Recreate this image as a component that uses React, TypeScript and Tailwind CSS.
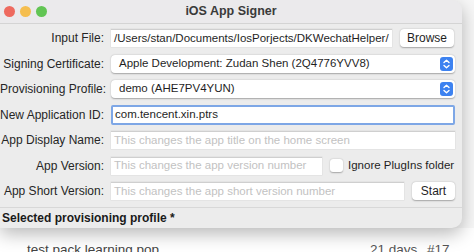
import { ReactNode } from 'react';

const FONT = { fontFamily: '"Liberation Sans", Arial, sans-serif' };

function Label({ children }: { children: ReactNode }) {
  return (
    <div className="w-[105px] shrink-0 whitespace-nowrap pr-[1px] text-right text-[12px] text-[#262626]">{children}</div>
  );
}

function Field({ value, placeholder, className = '' }: { value?: string; placeholder?: string; className?: string }) {
  return (
    <div
      className={`flex h-[18px] items-center overflow-hidden whitespace-nowrap border-t border-[#cfcfcf] bg-white px-[3px] text-[11.5px] shadow-[0_0_0_0.5px_#dcdcdc] ${className}`}
    >
      {value ? <span className="text-[#1f1f1f]">{value}</span> : <span className="text-[#c2c2c2]">{placeholder}</span>}
    </div>
  );
}

function Stepper() {
  return (
    <div className="flex h-[14px] w-[13px] items-center justify-center rounded-[3px] bg-[#3d82f0]">
      <svg width="7" height="10" viewBox="0 0 7 10" fill="none" stroke="white" strokeWidth="1.4" strokeLinecap="round" strokeLinejoin="round">
        <path d="M1 3.5 L3.5 1.2 L6 3.5" />
        <path d="M1 6.5 L3.5 8.8 L6 6.5" />
      </svg>
    </div>
  );
}

function Popup({ value }: { value: string }) {
  return (
    <div className="flex h-[18px] flex-1 items-center justify-between whitespace-nowrap rounded-[4px] bg-white pl-[8px] pr-[2px] text-[11.5px] text-[#1f1f1f] shadow-[0_0.5px_1.5px_rgba(0,0,0,0.3)]">
      <span>{value}</span>
      <Stepper />
    </div>
  );
}

function Button({ children, className = '' }: { children: ReactNode; className?: string }) {
  return (
    <div
      className={`flex h-[18px] shrink-0 items-center justify-center rounded-[4px] bg-white text-[12px] text-[#1f1f1f] shadow-[0_0.5px_1.5px_rgba(0,0,0,0.3)] ${className}`}
    >
      {children}
    </div>
  );
}

function Row({ children }: { children: ReactNode }) {
  return <div className="flex h-[20px] items-center gap-[6px]">{children}</div>;
}

export default function App() {
  return (
    <div className="relative h-[252px] w-[474px] overflow-hidden bg-[#f7f7f7]" style={FONT}>
      <div className="absolute left-0 top-[228px] h-[24px] w-full bg-white text-[13.5px]">
        <div className="absolute left-[27px] top-[12px] text-[#444]">test pack learning pop</div>
        <div className="absolute left-[370px] top-[12px] text-[#555]">21 days</div>
        <div className="absolute left-[427px] top-[12px] text-[#555]">#17</div>
      </div>

      <div className="relative z-10 flex h-[228px] w-[462px] flex-col overflow-hidden rounded-r-[10px] bg-[#ececec] shadow-[0_6px_18px_rgba(0,0,0,0.28)]">
        <div className="relative flex h-[24px] shrink-0 items-center justify-center border-b border-[#d4d4d4] bg-[#ebeaec]">
          <div className="absolute left-[4px] top-[6px] flex gap-[5px]">
            <span className="h-[11px] w-[11px] rounded-full bg-[#ee6a5f]" />
            <span className="h-[11px] w-[11px] rounded-full bg-[#f5be4f]" />
            <span className="h-[11px] w-[11px] rounded-full bg-[#62c554]" />
          </div>
          <span className="text-[12.5px] font-bold text-[#3a3a3a]">iOS App Signer</span>
        </div>

        <div className="flex flex-col gap-[5.5px] pr-[7px] pt-[4px]">
          <Row>
            <Label>Input File:</Label>
            <Field value="/Users/stan/Documents/IosPorjects/DKWechatHelper/" className="w-[281px] shrink-0" />
            <Button className="ml-[2px] w-[54px]">Browse</Button>
          </Row>
          <Row>
            <Label>Signing Certificate:</Label>
            <Popup value="Apple Development: Zudan Shen (2Q4776YVV8)" />
          </Row>
          <Row>
            <Label>Provisioning Profile:</Label>
            <Popup value="demo (AHE7PV4YUN)" />
          </Row>
          <Row>
            <Label>New Application ID:</Label>
            <div className="flex h-[20px] flex-1 items-center rounded-[2px] border-[2.5px] border-[#7ea7e6] bg-white px-[2px] text-[11.5px] text-[#1f1f1f]">
              com.tencent.xin.ptrs
            </div>
          </Row>
          <Row>
            <Label>App Display Name:</Label>
            <Field placeholder="This changes the app title on the home screen" className="flex-1" />
          </Row>
          <Row>
            <Label>App Version:</Label>
            <Field placeholder="This changes the app version number" className="w-[211px] shrink-0" />
            <div className="ml-[2px] h-[13px] w-[13px] shrink-0 rounded-[3px] bg-white shadow-[0_0.5px_1.5px_rgba(0,0,0,0.3)]" />
            <span className="ml-[-1px] whitespace-nowrap text-[11.5px] text-[#1f1f1f]">Ignore PlugIns folder</span>
          </Row>
          <Row>
            <Label>App Short Version:</Label>
            <Field placeholder="This changes the app short version number" className="w-[293px] shrink-0" />
            <Button className="ml-[2px] w-[43px]">Start</Button>
          </Row>
        </div>

        <div className="mt-auto flex h-[21px] items-center border-t border-[#d8d8d8] pl-[2px] text-[12px] font-bold text-[#1a1a1a]">
          Selected provisioning profile *
        </div>
      </div>
    </div>
  );
}
